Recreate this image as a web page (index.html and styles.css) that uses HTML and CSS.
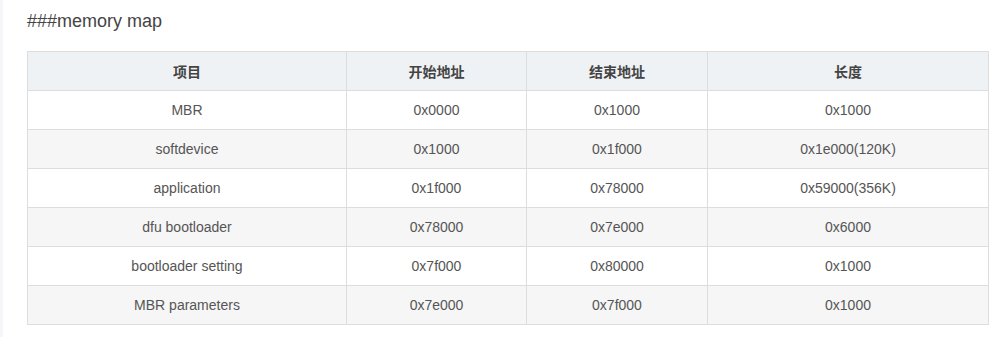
FILE: index.html
```html
<!DOCTYPE html>
<html>
<head>
<meta charset="utf-8">
<link rel="stylesheet" href="styles.css">
</head>
<body>
<div class="page">
  <p class="title">###memory map</p>
  <table class="map">
    <colgroup>
      <col class="c1"><col class="c2"><col class="c3"><col class="c4">
    </colgroup>
    <thead>
      <tr><th>项目</th><th>开始地址</th><th>结束地址</th><th>长度</th></tr>
    </thead>
    <tbody>
      <tr><td>MBR</td><td>0x0000</td><td>0x1000</td><td>0x1000</td></tr>
      <tr><td>softdevice</td><td>0x1000</td><td>0x1f000</td><td>0x1e000(120K)</td></tr>
      <tr><td>application</td><td>0x1f000</td><td>0x78000</td><td>0x59000(356K)</td></tr>
      <tr><td>dfu bootloader</td><td>0x78000</td><td>0x7e000</td><td>0x6000</td></tr>
      <tr><td>bootloader setting</td><td>0x7f000</td><td>0x80000</td><td>0x1000</td></tr>
      <tr><td>MBR parameters</td><td>0x7e000</td><td>0x7f000</td><td>0x1000</td></tr>
    </tbody>
  </table>
</div>
</body>
</html>
```
FILE: styles.css
```css
html, body {
  margin: 0;
  padding: 0;
  background: #ffffff;
}
body {
  font-family: "Liberation Sans", Arial, "Noto Sans CJK SC", sans-serif;
  color: #444;
}
.page {
  border-left: 3px solid #f5f6f8;
  min-height: 337px;
  box-sizing: border-box;
  padding: 11px 0 0 24px;
}
.title {
  margin: 0 0 19px 0;
  font-size: 18px;
  line-height: 21px;
  color: #444;
}
.map {
  border-collapse: collapse;
  width: 961px;
  table-layout: fixed;
  font-size: 14px;
  color: #555;
}
.c1 { width: 319px; }
.c2 { width: 180px; }
.c3 { width: 181px; }
.c4 { width: 281px; }
.map th, .map td {
  border: 1px solid #dddddd;
  text-align: center;
  height: 39px;
  padding: 0 8px;
  box-sizing: border-box;
  vertical-align: middle;
}
.map th {
  background: #eff2f5;
  font-weight: bold;
  color: #444;
}
.map tbody tr:nth-child(even) td {
  background: #f6f6f6;
}
```
